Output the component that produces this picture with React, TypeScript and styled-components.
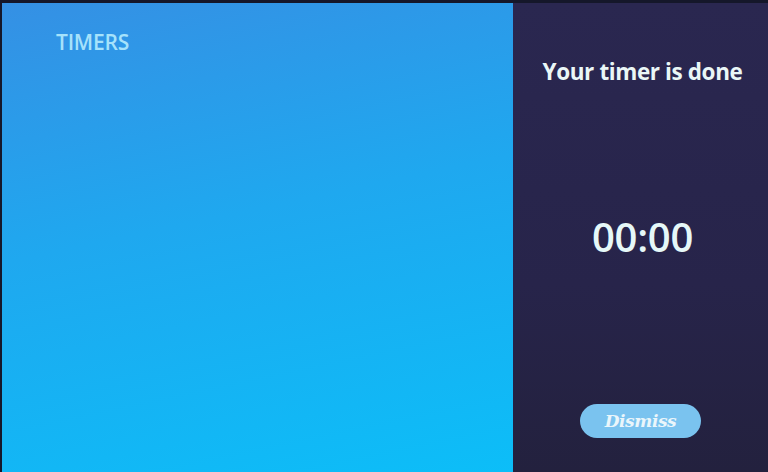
import React from "react";
import styled, { createGlobalStyle } from "styled-components";

const GlobalStyle = createGlobalStyle`
  html, body {
    margin: 0;
    padding: 0;
    width: 768px;
    height: 472px;
    overflow: hidden;
    background: #15172a;
  }
  #root {
    height: 100%;
  }
`;

const Screen = styled.div`
  box-sizing: border-box;
  width: 768px;
  height: 472px;
  padding: 3px 0 0 2px;
  display: grid;
  grid-template-columns: 511px 1fr;
  font-family: "Open Sans", "Noto Sans", sans-serif;
`;

const ListPanel = styled.section`
  background: linear-gradient(168deg, #3590e4 0%, #1fa8ef 45%, #0cbef8 100%);
  padding: 25px 0 0 54px;
`;

const PanelTitle = styled.h1`
  margin: 0;
  font-size: 21px;
  font-weight: 600;
  letter-spacing: -0.2px;
  color: #a6e2fb;
`;

const AlertPanel = styled.section`
  background: linear-gradient(180deg, #2a2750 0%, #27244a 60%, #23213e 100%);
  display: flex;
  flex-direction: column;
  align-items: center;
  padding: 53px 0 0 4px;
`;

const AlertTitle = styled.h2`
  margin: 0;
  font-size: 22.5px;
  font-weight: 700;
  letter-spacing: -0.4px;
  color: #eaf7f7;
`;

const Countdown = styled.div`
  margin-top: 122px;
  font-size: 40px;
  font-weight: 600;
  letter-spacing: -0.3px;
  color: #e6f8f8;
`;

const DismissButton = styled.button`
  margin: 140px 4px 0 0;
  width: 121px;
  height: 34px;
  border: none;
  border-radius: 17px;
  background: #7ac3ef;
  color: #eaf6fb;
  font-family: "DejaVu Serif", "Liberation Serif", serif;
  font-style: italic;
  font-weight: 700;
  font-size: 17px;
  letter-spacing: -0.4px;
  cursor: pointer;
`;

export default function App() {
  return (
    <>
      <GlobalStyle />
      <Screen>
        <ListPanel>
          <PanelTitle>TIMERS</PanelTitle>
        </ListPanel>
        <AlertPanel>
          <AlertTitle>Your timer is done</AlertTitle>
          <Countdown>00:00</Countdown>
          <DismissButton>Dismiss</DismissButton>
        </AlertPanel>
      </Screen>
    </>
  );
}
